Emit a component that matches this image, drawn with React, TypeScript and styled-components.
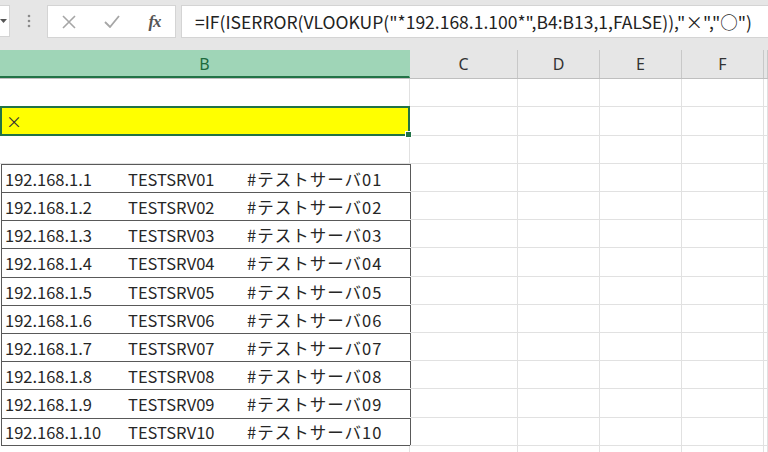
import React from "react";
import styled, { createGlobalStyle } from "styled-components";

const Global = createGlobalStyle`
  html, body { margin: 0; padding: 0; background: #ffffff; overflow: hidden; }
  body { font-family: "Noto Sans CJK JP", "Noto Sans", sans-serif; }
`;

const Page = styled.div`
  width: 768px;
  height: 452px;
  overflow: hidden;
  display: flex;
  flex-direction: column;
`;

const Toolbar = styled.div`
  height: 50px;
  flex: none;
  background: #e6e6e6;
  display: flex;
  align-items: flex-start;
  padding-top: 5px;
  box-sizing: border-box;
`;

const NameBox = styled.div`
  width: 10px;
  height: 32px;
  background: #ffffff;
  border: 1px solid #d4d4d4;
  border-left: none;
  box-sizing: border-box;
  display: flex;
  align-items: center;
  justify-content: flex-start;
`;

const Dots = styled.div`
  width: 37px;
  height: 32px;
  display: flex;
  align-items: center;
  justify-content: center;
`;

const ButtonBox = styled.div`
  width: 129px;
  height: 33px;
  background: #ffffff;
  border: 1px solid #d4d4d4;
  box-sizing: border-box;
  display: flex;
  align-items: center;
`;

const IconSlot = styled.div<{ $w: number }>`
  width: ${(p) => p.$w}px;
  height: 100%;
  display: flex;
  align-items: center;
  justify-content: center;
`;

const Fx = styled.span`
  font-family: "Liberation Serif", "DejaVu Serif", serif;
  font-style: italic;
  font-weight: bold;
  font-size: 17px;
  color: #555555;
  letter-spacing: -1px;
`;

const FormulaBox = styled.div`
  margin-left: 5px;
  flex: 1;
  height: 33px;
  background: #ffffff;
  border: 1px solid #d4d4d4;
  border-right: none;
  box-sizing: border-box;
  display: flex;
  align-items: center;
  padding-left: 13px;
  font-size: 17.5px;
  color: #222222;
  white-space: nowrap;
  overflow: hidden;
`;

const COLS = "410px 108px 82px 82px 82px 4px";

const HeaderRow = styled.div`
  display: grid;
  grid-template-columns: ${COLS};
  height: 28px;
  flex: none;
  background: #e6e6e6;
  border-bottom: 1px solid #bfbfbf;
`;

const ColHead = styled.div<{ $active?: boolean }>`
  display: flex;
  align-items: center;
  justify-content: center;
  font-family: "Noto Sans", sans-serif;
  font-size: 16px;
  box-sizing: border-box;
  border-right: 1px solid ${(p) => (p.$active ? "#9fd5b7" : "#c8c8c8")};
  background: ${(p) => (p.$active ? "#9fd5b7" : "#e6e6e6")};
  color: ${(p) => (p.$active ? "#1d6b3d" : "#333333")};
  border-bottom: ${(p) => (p.$active ? "2px solid #217346" : "none")};
  padding-top: ${(p) => (p.$active ? "2px" : "0")};
`;

const Row = styled.div<{ $h: number }>`
  display: grid;
  grid-template-columns: ${COLS};
  height: ${(p) => p.$h}px;
  flex: none;
`;

const Cell = styled.div`
  box-sizing: border-box;
  border-right: 1px solid #e1e1e1;
  border-bottom: 1px solid #e1e1e1;
`;

const SelectedCell = styled.div`
  position: relative;
  box-sizing: border-box;
  background: #ffff00;
  border: 2px solid #217346;
  margin-top: -1px;
  display: flex;
  align-items: center;
  padding-left: 4px;
  font-size: 16px;
  color: #333333;
`;

const Handle = styled.div`
  position: absolute;
  right: -4px;
  bottom: -4px;
  width: 5px;
  height: 5px;
  background: #217346;
  border: 1px solid #ffffff;
`;

const DataCell = styled.div<{ $last?: boolean }>`
  box-sizing: border-box;
  border-left: 1px solid #595959;
  border-right: 1px solid #595959;
  border-top: 1px solid #595959;
  border-bottom: ${(p) => (p.$last ? "1px solid #595959" : "none")};
  margin-left: 1px;
  margin-right: -1px;
  display: flex;
  align-items: center;
  padding-left: 3px;
  font-size: 16.5px;
  color: #262626;
  white-space: nowrap;
`;

const Field = styled.span<{ $w: number; $spaced?: boolean }>`
  width: ${(p) => p.$w}px;
  flex: none;
  letter-spacing: ${(p) => (p.$spaced ? "1px" : "0")};
`;

const heights = [28, 29, 28, 28, 28, 28, 29, 28, 28, 28, 28, 29, 28, 28];

const data = Array.from({ length: 10 }, (_, i) => {
  const n = i + 1;
  const nn = String(n).padStart(2, "0");
  return { ip: `192.168.1.${n}`, host: `TESTSRV${nn}`, note: `#テストサーバ${nn}` };
});

const EmptyCells = () => (
  <>
    <Cell />
    <Cell />
    <Cell />
    <Cell />
    <Cell />
  </>
);

export default function App() {
  return (
    <Page>
      <Global />
      <Toolbar>
        <NameBox>
          <svg width="7" height="5" viewBox="0 0 7 5">
            <path d="M0 0 L7 0 L3.5 4 Z" fill="#555" />
          </svg>
        </NameBox>
        <Dots>
          <svg width="4" height="14" viewBox="0 0 4 14">
            <circle cx="2" cy="2" r="1.3" fill="#8a8a8a" />
            <circle cx="2" cy="7" r="1.3" fill="#8a8a8a" />
            <circle cx="2" cy="12" r="1.3" fill="#8a8a8a" />
          </svg>
        </Dots>
        <ButtonBox>
          <IconSlot $w={42}>
            <svg width="14" height="14" viewBox="0 0 14 14">
              <path d="M1 1 L13 13 M13 1 L1 13" stroke="#a6a6a6" strokeWidth="1.6" fill="none" />
            </svg>
          </IconSlot>
          <IconSlot $w={44}>
            <svg width="16" height="13" viewBox="0 0 16 13">
              <path d="M1 7 L6 12 L15 1" stroke="#a6a6a6" strokeWidth="1.8" fill="none" />
            </svg>
          </IconSlot>
          <IconSlot $w={41}>
            <Fx>fx</Fx>
          </IconSlot>
        </ButtonBox>
        <FormulaBox>=IF(ISERROR(VLOOKUP("*192.168.1.100*",B4:B13,1,FALSE)),"×","○")</FormulaBox>
      </Toolbar>
      <HeaderRow>
        <ColHead $active>B</ColHead>
        <ColHead>C</ColHead>
        <ColHead>D</ColHead>
        <ColHead>E</ColHead>
        <ColHead>F</ColHead>
        <ColHead />
      </HeaderRow>
      <Row $h={heights[0]}>
        <Cell />
        <EmptyCells />
      </Row>
      <Row $h={heights[1]}>
        <SelectedCell>
          ×
          <Handle />
        </SelectedCell>
        <EmptyCells />
      </Row>
      <Row $h={heights[2]}>
        <Cell />
        <EmptyCells />
      </Row>
      {data.map((d, i) => (
        <Row key={d.ip} $h={heights[3 + i]}>
          <DataCell $last={i === data.length - 1}>
            <Field $w={123}>{d.ip}</Field>
            <Field $w={119}>{d.host}</Field>
            <Field $w={150} $spaced>
              {d.note}
            </Field>
          </DataCell>
          <EmptyCells />
        </Row>
      ))}
      <Row $h={28}>
        <Cell />
        <EmptyCells />
      </Row>
    </Page>
  );
}
